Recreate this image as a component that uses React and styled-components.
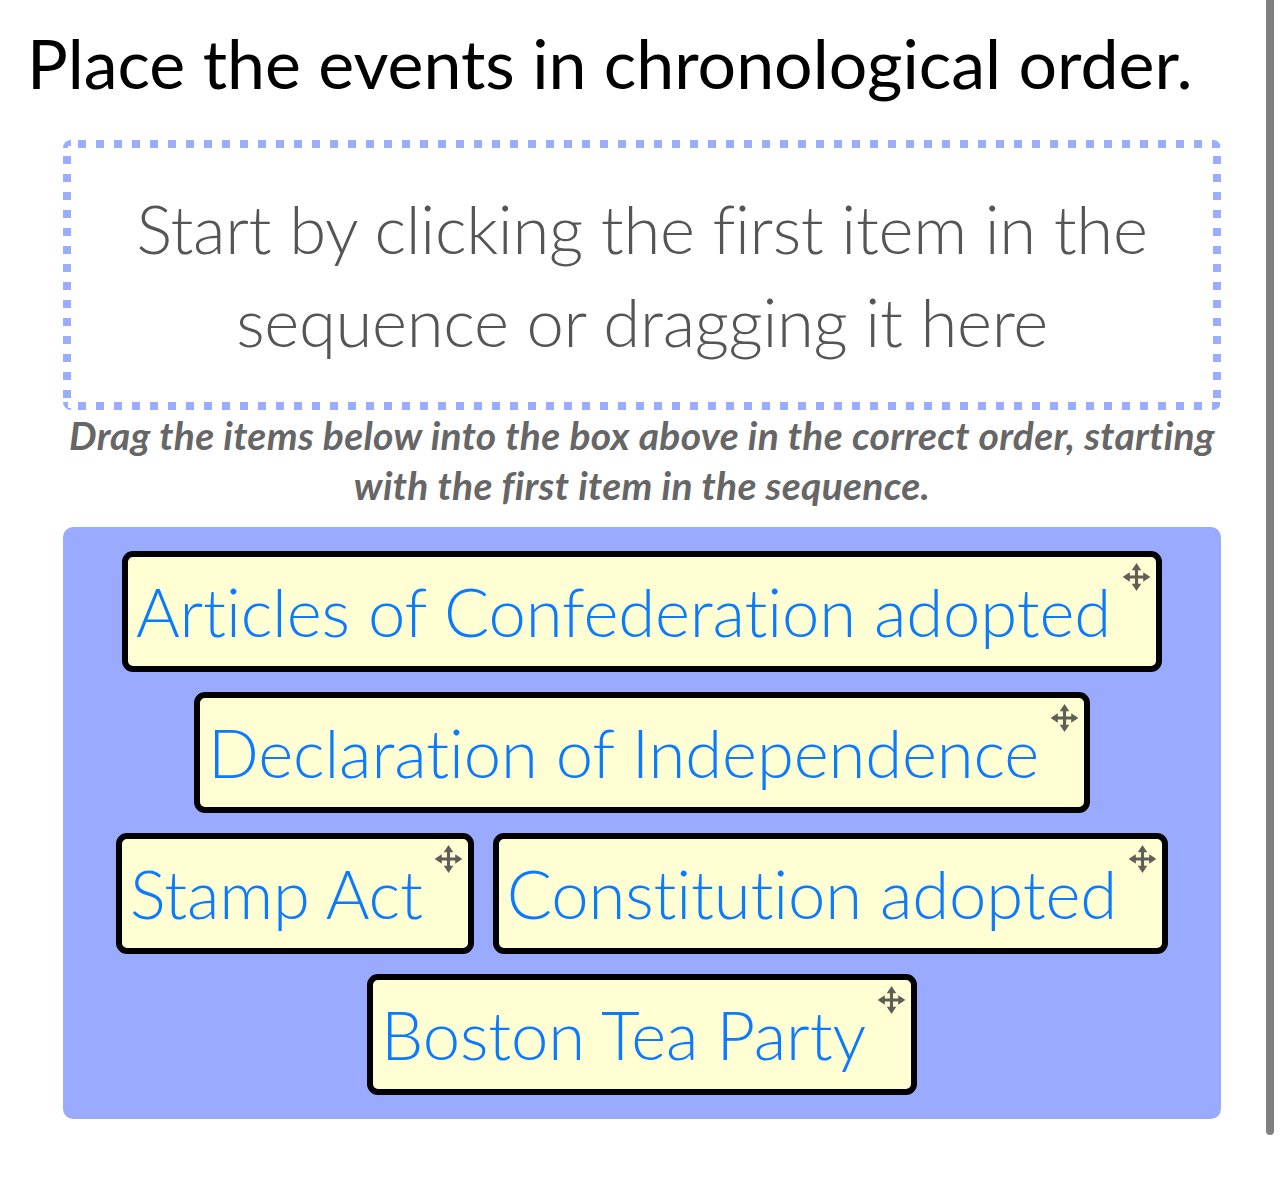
import React from "react";
import styled, { createGlobalStyle } from "styled-components";

const GlobalStyle = createGlobalStyle`
  html, body {
    margin: 0;
    padding: 0;
    background: #ffffff;
    font-family: "Lato", "Open Sans", sans-serif;
  }
`;

const Page = styled.main`
  padding: 22px 0 60px;
`;

const Title = styled.h1`
  margin: 0;
  padding-left: 27px;
  font-size: 68px;
  line-height: 1.2;
  font-weight: 400;
  color: #000;
  white-space: nowrap;
`;

const Column = styled.section`
  margin: 36px 63px 0 63px;
  display: flex;
  flex-direction: column;
`;

const dot = "#9badff";

const DropZone = styled.div`
  box-sizing: border-box;
  height: 270px;
  padding: 42px 40px;
  text-align: center;
  font-size: 67px;
  font-weight: 300;
  letter-spacing: -0.3px;
  line-height: 93px;
  color: #555;
  border-radius: 8px;
  background:
    linear-gradient(to right, ${dot} 8px, transparent 8px) 15px 0 / 18px 8px repeat-x,
    linear-gradient(to right, ${dot} 8px, transparent 8px) 15px 100% / 18px 8px repeat-x,
    linear-gradient(to bottom, ${dot} 8px, transparent 8px) 0 16px / 8px 18px repeat-y,
    linear-gradient(to bottom, ${dot} 8px, transparent 8px) 100% 16px / 8px 18px repeat-y;
`;

const Hint = styled.p`
  margin: 0;
  text-align: center;
  font-size: 39px;
  font-weight: 700;
  font-style: italic;
  letter-spacing: 0.3px;
  line-height: 50px;
  color: #666;
`;

const Pool = styled.div`
  margin-top: 17px;
  padding: 24px 10px;
  background: #9aaaff;
  border-radius: 10px;
  display: flex;
  flex-wrap: wrap;
  justify-content: center;
  gap: 20px 19px;
`;

const Card = styled.div`
  display: inline-flex;
  align-items: flex-start;
  box-sizing: border-box;
  padding: 14px 6px 14px 8px;
  background: #ffffd3;
  border: 6px solid #000;
  border-radius: 11px;
  font-size: 67px;
  font-weight: 300;
  letter-spacing: -0.15px;
  line-height: 81px;
  color: #0a7bff;
  white-space: nowrap;
  cursor: move;
`;

const Label = styled.span`
  display: block;
`;

const Grip = styled.svg`
  flex: none;
  width: 27px;
  height: 28px;
  margin: -8px 0 0 12px;
`;

function MoveIcon() {
  return (
    <Grip viewBox="0 0 26 27" aria-hidden="true">
      <g fill="#5f5f57" stroke="#5f5f57" strokeLinecap="round">
        <line x1="13" y1="4" x2="13" y2="23" strokeWidth="3" />
        <line x1="3.5" y1="13.5" x2="22.5" y2="13.5" strokeWidth="3" />
        <polygon points="13,1 9.3,6.5 16.7,6.5" strokeWidth="1" />
        <polygon points="13,26 9.3,20.5 16.7,20.5" strokeWidth="1" />
        <polygon points="0.5,13.5 6,9.8 6,17.2" strokeWidth="1" />
        <polygon points="25.5,13.5 20,9.8 20,17.2" strokeWidth="1" />
      </g>
    </Grip>
  );
}

const ScrollThumb = styled.div`
  position: fixed;
  top: 0;
  right: 10px;
  width: 8px;
  height: 1135px;
  background: #808080;
  border-radius: 0 0 4px 4px;
`;

const events = [
  "Articles of Confederation adopted",
  "Declaration of Independence",
  "Stamp Act",
  "Constitution adopted",
  "Boston Tea Party",
];

export default function App() {
  return (
    <Page>
      <GlobalStyle />
      <Title>Place the events in chronological order.</Title>
      <Column>
        <DropZone>
          Start by clicking the first item in the sequence or dragging it here
        </DropZone>
        <Hint>
          Drag the items below into the box above in the correct order, starting
          with the first item in the sequence.
        </Hint>
        <Pool>
          {events.map((e) => (
            <Card key={e}>
              <Label>{e}</Label>
              <MoveIcon />
            </Card>
          ))}
        </Pool>
      </Column>
      <ScrollThumb />
    </Page>
  );
}
